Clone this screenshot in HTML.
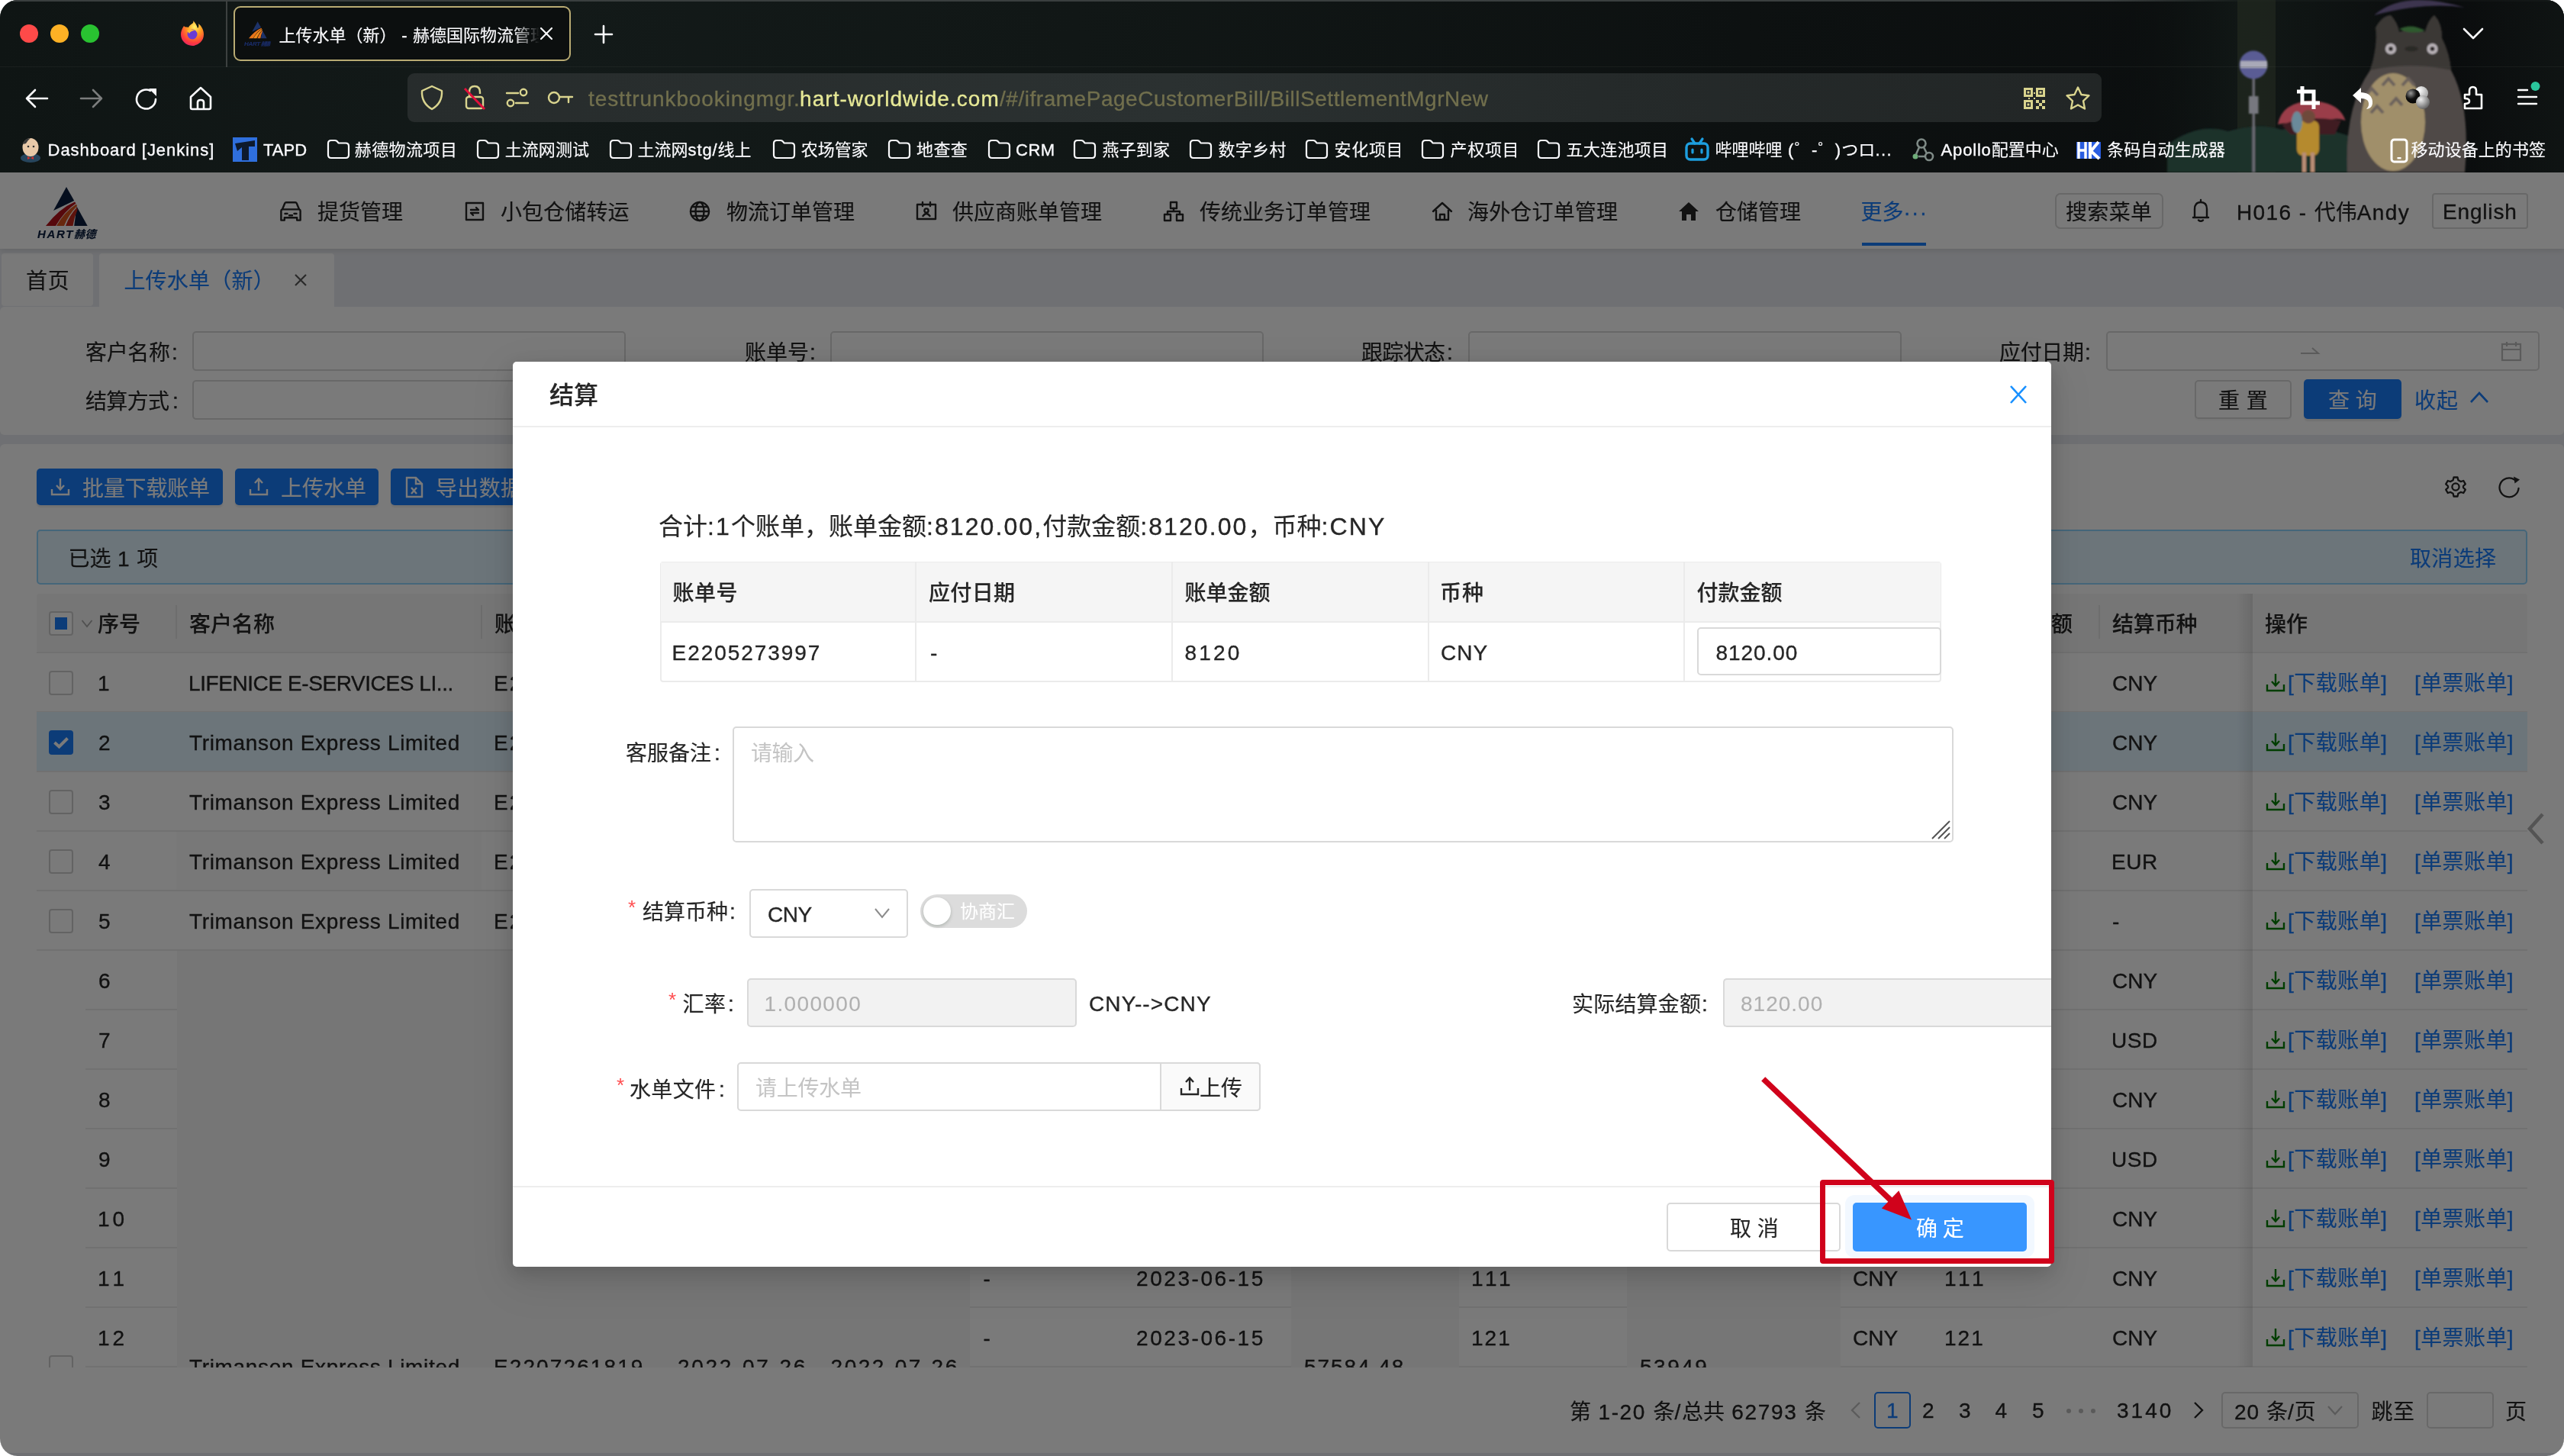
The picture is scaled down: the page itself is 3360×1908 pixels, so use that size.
<!DOCTYPE html>
<html lang="zh-CN">
<head>
<meta charset="utf-8">
<title>上传水单（新） - 赫德国际物流管理</title>
<style>html,body{margin:0;padding:0;background:#fff;}body{width:3360px;height:1908px;overflow:hidden;position:relative;font-family:"Liberation Sans","Noto Sans CJK SC",sans-serif;}#win{position:absolute;left:0;top:0;width:3360px;height:1908px;border-radius:23px;overflow:hidden;background:#7a7a7a;will-change:transform;}.a{position:absolute;box-sizing:content-box;}.t{white-space:pre;-webkit-text-stroke:0.35px;}.c{-webkit-text-stroke:0.15px;}.z{letter-spacing:0;}svg.a{overflow:visible;}@media (min-resolution:2dppx) and (max-width:2000px){body{width:1680px;height:954px;}#win{transform:scale(.5);transform-origin:0 0;}}</style>
</head>
<body>
<div id="win">
<div class="a" id="app" style="left:0;top:226px;width:3360px;height:1682px;overflow:hidden;background:#e9ebf0;z-index:0"><div class="a" style="left:0;top:-226px;width:3360px;height:1908px">
<div class="a" style="left:0px;top:326px;width:3360px;height:76px;background:#e9ebf0;"></div>
<div class="a" style="left:2px;top:332px;width:120px;height:69px;background:#fdfdfd;border-radius:4px;"></div>
<div class="a t" style="left:34px;top:348.0px;height:42px;line-height:42px;font-size:28px;color:#262626;-webkit-text-stroke:0.15px;letter-spacing:0.7px;">首页</div>
<div class="a" style="left:130px;top:332px;width:308px;height:70px;background:#fff;border-radius:4px;border-bottom-left-radius:0;border-bottom-right-radius:0;"></div>
<div class="a t" style="left:162.4px;top:348.0px;height:42px;line-height:42px;font-size:28px;color:#1b7dfa;-webkit-text-stroke:0.15px;letter-spacing:0.23px;">上传水单（新）</div>
<svg class="a" style="left:385px;top:358px;" width="18" height="18" viewBox="0 0 18 18"><path d="M2 2 L16 16 M16 2 L2 16" stroke="#595959" stroke-width="2.2" fill="none"/></svg>
<div class="a" style="left:0px;top:402px;width:3360px;height:168px;background:#fff;border-radius:6px;"></div>
<div class="a" style="left:0px;top:570px;width:3360px;height:12px;background:#e9ebf0;z-index:0;"></div>
<div class="a t" style="left:112px;top:442.0px;height:42px;line-height:42px;font-size:28px;color:#262626;-webkit-text-stroke:0.15px;letter-spacing:-0.33px;">客户名称</div>
<div class="a t" style="left:225px;top:440.5px;height:42px;line-height:42px;font-size:28px;color:#262626;">:</div>
<div class="a" style="left:252px;top:434px;width:568px;height:52px;background:#fff;border:2px solid #d9d9d9;border-radius:5px;box-sizing:border-box;"></div>
<div class="a t" style="left:976px;top:442.0px;height:42px;line-height:42px;font-size:28px;color:#262626;-webkit-text-stroke:0.15px;">账单号</div>
<div class="a t" style="left:1061px;top:440.5px;height:42px;line-height:42px;font-size:28px;color:#262626;">:</div>
<div class="a" style="left:1088px;top:434px;width:568px;height:52px;background:#fff;border:2px solid #d9d9d9;border-radius:5px;box-sizing:border-box;"></div>
<div class="a t" style="left:1784px;top:442.0px;height:42px;line-height:42px;font-size:28px;color:#262626;-webkit-text-stroke:0.15px;letter-spacing:-0.67px;">跟踪状态</div>
<div class="a t" style="left:1896px;top:440.5px;height:42px;line-height:42px;font-size:28px;color:#262626;">:</div>
<div class="a" style="left:1924px;top:434px;width:568px;height:52px;background:#fff;border:2px solid #d9d9d9;border-radius:5px;box-sizing:border-box;"></div>
<div class="a t" style="left:2620px;top:442.0px;height:42px;line-height:42px;font-size:28px;color:#262626;-webkit-text-stroke:0.15px;letter-spacing:-0.33px;">应付日期</div>
<div class="a t" style="left:2732px;top:440.5px;height:42px;line-height:42px;font-size:28px;color:#262626;">:</div>
<div class="a" style="left:2760px;top:434px;width:568px;height:52px;background:#fff;border:2px solid #d9d9d9;border-radius:5px;box-sizing:border-box;"></div>
<div class="a t" style="left:112px;top:506.0px;height:42px;line-height:42px;font-size:28px;color:#262626;-webkit-text-stroke:0.15px;letter-spacing:-0.67px;">结算方式</div>
<div class="a t" style="left:226px;top:504.5px;height:42px;line-height:42px;font-size:28px;color:#262626;">:</div>
<div class="a" style="left:252px;top:498px;width:568px;height:52px;background:#fff;border:2px solid #d9d9d9;border-radius:5px;box-sizing:border-box;"></div>
<svg class="a" style="left:3014px;top:450px;" width="26" height="18" viewBox="0 0 26 18"><path d="M1 13 H24 L16 6" stroke="#bfbfbf" stroke-width="2" fill="none"/></svg>
<svg class="a" style="left:3277px;top:446px;" width="28" height="28" viewBox="0 0 28 28"><rect x="2" y="5" width="24" height="21" stroke="#bfbfbf" stroke-width="2.2" fill="none"/><path d="M2 12 H26 M8 2 V8 M20 2 V8" stroke="#bfbfbf" stroke-width="2.2" fill="none"/></svg>
<div class="a" style="left:2875.5px;top:497.5px;width:127.5px;height:51.5px;background:#fff;border:2px solid #d9d9d9;border-radius:5px;box-sizing:border-box;box-shadow:0 2px 0 rgba(0,0,0,.03);"></div>
<div class="a t" style="left:2907px;top:504.5px;height:42px;line-height:42px;font-size:28px;color:#262626;letter-spacing:0.5px;"><span class="c">重</span> <span class="c">置</span></div>
<div class="a" style="left:3019px;top:497px;width:128px;height:52px;background:#1b7dfa;border-radius:5px;box-shadow:0 3px 2px rgba(0,0,0,.08);"></div>
<div class="a t" style="left:3051px;top:505.0px;height:42px;line-height:42px;font-size:28px;color:#fff;-webkit-text-stroke:0.1px;">查 询</div>
<div class="a t" style="left:3164px;top:505.0px;height:42px;line-height:42px;font-size:28px;color:#1b7dfa;-webkit-text-stroke:0.15px;letter-spacing:1.0px;">收起</div>
<svg class="a" style="left:3236px;top:512px;" width="26" height="18" viewBox="0 0 26 18"><path d="M2 15 L13 3 L24 15" stroke="#1b7dfa" stroke-width="2.6" fill="none"/></svg>
<div class="a" style="left:0px;top:582px;width:3360px;height:1326px;background:#fff;border-radius:6px;"></div>
<div class="a" style="left:48px;top:614px;width:244px;height:48px;background:#1b7dfa;border-radius:5px;box-shadow:0 3px 2px rgba(0,0,0,.07);"></div>
<svg class="a" style="left:66px;top:626px;" width="26" height="24" viewBox="0 0 26 24"><path d="M2 15 V22 H24 V15 M13 1 V15 M8 10 L13 15.5 L18 10" stroke="#fff" stroke-width="2.4" fill="none"/></svg>
<div class="a t" style="left:108px;top:620.0px;height:42px;line-height:42px;font-size:28px;color:#fff;-webkit-text-stroke:0.1px;letter-spacing:-0.2px;">批量下载账单</div>
<div class="a" style="left:308px;top:614px;width:188px;height:48px;background:#1b7dfa;border-radius:5px;box-shadow:0 3px 2px rgba(0,0,0,.07);"></div>
<svg class="a" style="left:326px;top:626px;" width="26" height="24" viewBox="0 0 26 24"><path d="M2 15 V22 H24 V15 M13 17 V2 M8 7 L13 1.5 L18 7" stroke="#fff" stroke-width="2.4" fill="none"/></svg>
<div class="a t" style="left:368px;top:620.0px;height:42px;line-height:42px;font-size:28px;color:#fff;-webkit-text-stroke:0.1px;">上传水单</div>
<div class="a" style="left:512px;top:614px;width:188px;height:48px;background:#1b7dfa;border-radius:5px;box-shadow:0 3px 2px rgba(0,0,0,.07);"></div>
<svg class="a" style="left:530px;top:624px;" width="26" height="29" viewBox="0 0 26 29"><path d="M3 2 H15 L23 10 V27 H3 Z M15 2 V10 H23" stroke="#fff" stroke-width="2.4" fill="none" stroke-width="2"/><path d="M9 15 L16 23 M16 15 L9 23" stroke="#fff" stroke-width="2.4" fill="none" stroke-width="2"/></svg>
<div class="a t" style="left:571px;top:620.0px;height:42px;line-height:42px;font-size:28px;color:#fff;-webkit-text-stroke:0.1px;letter-spacing:0.33px;">导出数据</div>
<svg class="a" style="left:3203px;top:623px;" width="30" height="30" viewBox="0 0 30 30"><circle cx="15" cy="15" r="4.6" stroke="#262626" stroke-width="2.3" fill="none"/><path d="M12.5 2.5 H17.5 L18.4 6.3 L21.6 8.1 L25.3 7 L27.8 11.3 L25 14 V16 L27.8 18.7 L25.3 23 L21.6 21.9 L18.4 23.7 L17.5 27.5 H12.5 L11.6 23.7 L8.4 21.9 L4.7 23 L2.2 18.7 L5 16 V14 L2.2 11.3 L4.7 7 L8.4 8.1 L11.6 6.3 Z" stroke="#262626" stroke-width="2.3" fill="none" stroke-linejoin="round"/></svg>
<svg class="a" style="left:3273px;top:623px;" width="32" height="30" viewBox="0 0 32 30"><path d="M27.5 17 A12.5 12.5 0 1 1 22 5.5" stroke="#262626" stroke-width="2.3" fill="none" stroke-linecap="round"/><path d="M21 1.5 L29 5.5 L22.5 10.5 Z" fill="#262626"/></svg>
<div class="a" style="left:48px;top:694px;width:3264px;height:72px;background:#e1f4ff;border:2px solid #91d5ff;border-radius:5px;box-sizing:border-box;"></div>
<div class="a t" style="left:89.5px;top:712.0px;height:42px;line-height:42px;font-size:28px;color:#262626;letter-spacing:0.83px;"><span class="c z">已选</span> 1 <span class="c z">项</span></div>
<div class="a t" style="left:3158px;top:712.0px;height:42px;line-height:42px;font-size:28px;color:#1b7dfa;-webkit-text-stroke:0.15px;letter-spacing:0.33px;">取消选择</div>
<div class="a" style="left:48px;top:778px;width:3264px;height:77px;background:#f6f6f6;border-radius:4px;"></div>
<div class="a" style="left:48px;top:854px;width:3264px;height:2px;background:#ececec;"></div>
<div class="a" style="left:230px;top:793px;width:2px;height:44px;background:#e4e4e4;"></div>
<div class="a" style="left:630px;top:793px;width:2px;height:44px;background:#e4e4e4;"></div>
<div class="a" style="left:2750px;top:793px;width:2px;height:44px;background:#e4e4e4;"></div>
<div class="a t" style="left:128px;top:797.5px;height:42px;line-height:42px;font-size:28px;color:#262626;font-weight:500;-webkit-text-stroke:0.15px;">序号</div>
<div class="a t" style="left:248px;top:797.5px;height:42px;line-height:42px;font-size:28px;color:#262626;font-weight:500;-webkit-text-stroke:0.15px;">客户名称</div>
<div class="a t" style="left:648px;top:797.5px;height:42px;line-height:42px;font-size:28px;color:#262626;font-weight:500;-webkit-text-stroke:0.15px;letter-spacing:0.5px;">账单号</div>
<div class="a t" style="left:2548px;top:797.5px;height:42px;line-height:42px;font-size:28px;color:#262626;font-weight:500;-webkit-text-stroke:0.15px;">实际结算金额</div>
<div class="a t" style="left:2768px;top:797.5px;height:42px;line-height:42px;font-size:28px;color:#262626;font-weight:500;-webkit-text-stroke:0.15px;letter-spacing:-0.13px;">结算币种</div>
<div class="a" style="left:64px;top:801px;width:32px;height:32px;background:#fff;border:2px solid #d0d0d0;border-radius:4px;box-sizing:border-box;"></div>
<div class="a" style="left:72px;top:809px;width:16px;height:16px;background:#1b7dfa;"></div>
<svg class="a" style="left:106px;top:811px;" width="16" height="12" viewBox="0 0 16 12"><path d="M1.5 2 L8 10 L14.5 2" stroke="#a8a8a8" stroke-width="1.8" fill="none"/></svg>
<div class="a" style="left:0px;top:855px;width:3360px;height:937px;overflow:hidden;"><div class="a" style="left:0;top:-855px;width:3360px;height:1908px"><div class="a" style="left:232px;top:1245px;width:1039px;height:547px;background:#f6f6f6;"></div><div class="a" style="left:231px;top:1089px;width:400px;height:78px;background:#fafafa;"></div><div class="a" style="left:1692px;top:1635px;width:220px;height:157px;background:#f6f6f6;"></div><div class="a" style="left:2132px;top:1635px;width:280px;height:157px;background:#f6f6f6;"></div><div class="a" style="left:48px;top:932px;width:3264px;height:2px;background:#ececec;"></div><div class="a" style="left:64px;top:879px;width:32px;height:32px;background:#fff;border:2px solid #d0d0d0;border-radius:4px;box-sizing:border-box;"></div><div class="a t" style="left:247px;top:874.7px;height:42px;line-height:42px;font-size:28px;color:#262626;letter-spacing:-0.42px;">LIFENICE E-SERVICES LI...</div><div class="a t" style="left:647px;top:874.7px;height:42px;line-height:42px;font-size:28px;color:#262626;letter-spacing:2.0px;">E22</div><div class="a t" style="left:128px;top:874.7px;height:42px;line-height:42px;font-size:28px;color:#262626;">1</div><div class="a t" style="left:2768px;top:874.7px;height:42px;line-height:42px;font-size:28px;color:#262626;">CNY</div><div class="a" style="left:48px;top:933px;width:3264px;height:78px;background:#e1f4ff;"></div><div class="a" style="left:48px;top:1010px;width:3264px;height:2px;background:#ececec;"></div><div class="a" style="left:64px;top:957px;width:32px;height:32px;background:#1b7dfa;border-radius:4px;"></div><svg class="a" style="left:69px;top:965px;" width="22" height="16" viewBox="0 0 22 16"><path d="M2.5 8 L8.5 13.5 L19.5 2.5" stroke="#fff" stroke-width="4" fill="none"/></svg><div class="a t" style="left:248px;top:952.7px;height:42px;line-height:42px;font-size:28px;color:#262626;letter-spacing:0.67px;">Trimanson Express Limited</div><div class="a t" style="left:647px;top:952.7px;height:42px;line-height:42px;font-size:28px;color:#262626;letter-spacing:2.0px;">E22</div><div class="a t" style="left:129px;top:952.7px;height:42px;line-height:42px;font-size:28px;color:#262626;">2</div><div class="a t" style="left:2768px;top:952.7px;height:42px;line-height:42px;font-size:28px;color:#262626;">CNY</div><div class="a" style="left:48px;top:1088px;width:3264px;height:2px;background:#ececec;"></div><div class="a" style="left:64px;top:1035px;width:32px;height:32px;background:#fff;border:2px solid #d0d0d0;border-radius:4px;box-sizing:border-box;"></div><div class="a t" style="left:248px;top:1030.7px;height:42px;line-height:42px;font-size:28px;color:#262626;letter-spacing:0.67px;">Trimanson Express Limited</div><div class="a t" style="left:647px;top:1030.7px;height:42px;line-height:42px;font-size:28px;color:#262626;letter-spacing:2.0px;">E22</div><div class="a t" style="left:129px;top:1030.7px;height:42px;line-height:42px;font-size:28px;color:#262626;">3</div><div class="a t" style="left:2768px;top:1030.7px;height:42px;line-height:42px;font-size:28px;color:#262626;">CNY</div><div class="a" style="left:48px;top:1166px;width:3264px;height:2px;background:#ececec;"></div><div class="a" style="left:64px;top:1113px;width:32px;height:32px;background:#fff;border:2px solid #d0d0d0;border-radius:4px;box-sizing:border-box;"></div><div class="a t" style="left:248px;top:1108.7px;height:42px;line-height:42px;font-size:28px;color:#262626;letter-spacing:0.67px;">Trimanson Express Limited</div><div class="a t" style="left:647px;top:1108.7px;height:42px;line-height:42px;font-size:28px;color:#262626;letter-spacing:2.0px;">E22</div><div class="a t" style="left:129px;top:1108.7px;height:42px;line-height:42px;font-size:28px;color:#262626;">4</div><div class="a t" style="left:2767px;top:1108.7px;height:42px;line-height:42px;font-size:28px;color:#262626;letter-spacing:0.5px;">EUR</div><div class="a" style="left:48px;top:1244px;width:3264px;height:2px;background:#ececec;"></div><div class="a" style="left:64px;top:1191px;width:32px;height:32px;background:#fff;border:2px solid #d0d0d0;border-radius:4px;box-sizing:border-box;"></div><div class="a t" style="left:248px;top:1186.7px;height:42px;line-height:42px;font-size:28px;color:#262626;letter-spacing:0.67px;">Trimanson Express Limited</div><div class="a t" style="left:647px;top:1186.7px;height:42px;line-height:42px;font-size:28px;color:#262626;letter-spacing:2.0px;">E22</div><div class="a t" style="left:129px;top:1186.7px;height:42px;line-height:42px;font-size:28px;color:#262626;">5</div><div class="a t" style="left:2768px;top:1186.7px;height:42px;line-height:42px;font-size:28px;color:#262626;">-</div><div class="a" style="left:112px;top:1322px;width:120px;height:2px;background:#ececec;"></div><div class="a" style="left:1271px;top:1322px;width:421px;height:2px;background:#ececec;"></div><div class="a" style="left:1912px;top:1322px;width:220px;height:2px;background:#ececec;"></div><div class="a" style="left:2412px;top:1322px;width:900px;height:2px;background:#ececec;"></div><div class="a t" style="left:129px;top:1264.7px;height:42px;line-height:42px;font-size:28px;color:#262626;">6</div><div class="a t" style="left:2768px;top:1264.7px;height:42px;line-height:42px;font-size:28px;color:#262626;">CNY</div><div class="a" style="left:112px;top:1400px;width:120px;height:2px;background:#ececec;"></div><div class="a" style="left:1271px;top:1400px;width:421px;height:2px;background:#ececec;"></div><div class="a" style="left:1912px;top:1400px;width:220px;height:2px;background:#ececec;"></div><div class="a" style="left:2412px;top:1400px;width:900px;height:2px;background:#ececec;"></div><div class="a t" style="left:129px;top:1342.7px;height:42px;line-height:42px;font-size:28px;color:#262626;">7</div><div class="a t" style="left:2767px;top:1342.7px;height:42px;line-height:42px;font-size:28px;color:#262626;letter-spacing:0.5px;">USD</div><div class="a" style="left:112px;top:1478px;width:120px;height:2px;background:#ececec;"></div><div class="a" style="left:1271px;top:1478px;width:421px;height:2px;background:#ececec;"></div><div class="a" style="left:1912px;top:1478px;width:220px;height:2px;background:#ececec;"></div><div class="a" style="left:2412px;top:1478px;width:900px;height:2px;background:#ececec;"></div><div class="a t" style="left:129px;top:1420.7px;height:42px;line-height:42px;font-size:28px;color:#262626;">8</div><div class="a t" style="left:2768px;top:1420.7px;height:42px;line-height:42px;font-size:28px;color:#262626;">CNY</div><div class="a" style="left:112px;top:1556px;width:120px;height:2px;background:#ececec;"></div><div class="a" style="left:1271px;top:1556px;width:421px;height:2px;background:#ececec;"></div><div class="a" style="left:1912px;top:1556px;width:220px;height:2px;background:#ececec;"></div><div class="a" style="left:2412px;top:1556px;width:900px;height:2px;background:#ececec;"></div><div class="a t" style="left:129px;top:1498.7px;height:42px;line-height:42px;font-size:28px;color:#262626;">9</div><div class="a t" style="left:2767px;top:1498.7px;height:42px;line-height:42px;font-size:28px;color:#262626;letter-spacing:0.5px;">USD</div><div class="a" style="left:112px;top:1634px;width:120px;height:2px;background:#ececec;"></div><div class="a" style="left:1271px;top:1634px;width:421px;height:2px;background:#ececec;"></div><div class="a" style="left:1912px;top:1634px;width:220px;height:2px;background:#ececec;"></div><div class="a" style="left:2412px;top:1634px;width:900px;height:2px;background:#ececec;"></div><div class="a t" style="left:128px;top:1576.7px;height:42px;line-height:42px;font-size:28px;color:#262626;letter-spacing:4.0px;">10</div><div class="a t" style="left:2768px;top:1576.7px;height:42px;line-height:42px;font-size:28px;color:#262626;">CNY</div><div class="a" style="left:112px;top:1712px;width:120px;height:2px;background:#ececec;"></div><div class="a" style="left:1271px;top:1712px;width:421px;height:2px;background:#ececec;"></div><div class="a" style="left:1912px;top:1712px;width:220px;height:2px;background:#ececec;"></div><div class="a" style="left:2412px;top:1712px;width:900px;height:2px;background:#ececec;"></div><div class="a t" style="left:128px;top:1654.7px;height:42px;line-height:42px;font-size:28px;color:#262626;letter-spacing:6.0px;">11</div><div class="a t" style="left:2768px;top:1654.7px;height:42px;line-height:42px;font-size:28px;color:#262626;">CNY</div><div class="a" style="left:112px;top:1790px;width:120px;height:2px;background:#ececec;"></div><div class="a" style="left:1271px;top:1790px;width:421px;height:2px;background:#ececec;"></div><div class="a" style="left:1912px;top:1790px;width:220px;height:2px;background:#ececec;"></div><div class="a" style="left:2412px;top:1790px;width:900px;height:2px;background:#ececec;"></div><div class="a t" style="left:128px;top:1732.7px;height:42px;line-height:42px;font-size:28px;color:#262626;letter-spacing:4.0px;">12</div><div class="a t" style="left:2768px;top:1732.7px;height:42px;line-height:42px;font-size:28px;color:#262626;">CNY</div><div class="a t" style="left:1288.5px;top:1654.7px;height:42px;line-height:42px;font-size:28px;color:#262626;">-</div><div class="a t" style="left:1489px;top:1654.7px;height:42px;line-height:42px;font-size:28px;color:#262626;letter-spacing:2.56px;">2023-06-15</div><div class="a t" style="left:1928px;top:1654.7px;height:42px;line-height:42px;font-size:28px;color:#262626;letter-spacing:4.5px;">111</div><div class="a t" style="left:2428px;top:1654.7px;height:42px;line-height:42px;font-size:28px;color:#262626;">CNY</div><div class="a t" style="left:2548px;top:1654.7px;height:42px;line-height:42px;font-size:28px;color:#262626;letter-spacing:4.5px;">111</div><div class="a t" style="left:1288.5px;top:1732.7px;height:42px;line-height:42px;font-size:28px;color:#262626;">-</div><div class="a t" style="left:1489px;top:1732.7px;height:42px;line-height:42px;font-size:28px;color:#262626;letter-spacing:2.56px;">2023-06-15</div><div class="a t" style="left:1928px;top:1732.7px;height:42px;line-height:42px;font-size:28px;color:#262626;letter-spacing:2.0px;">121</div><div class="a t" style="left:2428px;top:1732.7px;height:42px;line-height:42px;font-size:28px;color:#262626;">CNY</div><div class="a t" style="left:2548px;top:1732.7px;height:42px;line-height:42px;font-size:28px;color:#262626;letter-spacing:2.0px;">121</div><div class="a" style="left:64px;top:1776px;width:32px;height:32px;background:#fff;border:2px solid #d0d0d0;border-radius:4px;box-sizing:border-box;"></div><div class="a t" style="left:248px;top:1771.2px;height:42px;line-height:42px;font-size:28px;color:#262626;letter-spacing:0.67px;">Trimanson Express Limited</div><div class="a t" style="left:647px;top:1771.2px;height:42px;line-height:42px;font-size:28px;color:#262626;letter-spacing:2.1px;">E2207261819</div><div class="a t" style="left:888px;top:1771.2px;height:42px;line-height:42px;font-size:28px;color:#262626;letter-spacing:2.67px;">2022-07-26</div><div class="a t" style="left:1088.6px;top:1771.2px;height:42px;line-height:42px;font-size:28px;color:#262626;letter-spacing:2.49px;">2022-07-26</div><div class="a t" style="left:1709px;top:1771.2px;height:42px;line-height:42px;font-size:28px;color:#262626;letter-spacing:1.94px;">57584.48</div><div class="a t" style="left:2149px;top:1771.2px;height:42px;line-height:42px;font-size:28px;color:#262626;letter-spacing:2.5px;">53949</div><div class="a" style="left:2932px;top:778px;width:20px;height:1013px;background:linear-gradient(90deg,rgba(0,0,0,0) 0%,rgba(0,0,0,.10) 100%);"></div><svg class="a" style="left:2969px;top:881px;" width="26" height="26" viewBox="0 0 26 26"><path d="M2 16 V24 H24 V16 M13 2 V17 M8 12 L13 17.5 L18 12" stroke="#008000" stroke-width="2.4" fill="none"/></svg><div class="a t" style="left:2998px;top:875.2px;height:42px;line-height:42px;font-size:28px;color:#1b7dfa;letter-spacing:0.5px;">[<span class="c">下载账单</span>]</div><div class="a t" style="left:3164px;top:875.2px;height:42px;line-height:42px;font-size:28px;color:#1b7dfa;letter-spacing:0.4px;">[<span class="c">单票账单</span>]</div><svg class="a" style="left:2969px;top:959px;" width="26" height="26" viewBox="0 0 26 26"><path d="M2 16 V24 H24 V16 M13 2 V17 M8 12 L13 17.5 L18 12" stroke="#008000" stroke-width="2.4" fill="none"/></svg><div class="a t" style="left:2998px;top:953.2px;height:42px;line-height:42px;font-size:28px;color:#1b7dfa;letter-spacing:0.5px;">[<span class="c">下载账单</span>]</div><div class="a t" style="left:3164px;top:953.2px;height:42px;line-height:42px;font-size:28px;color:#1b7dfa;letter-spacing:0.4px;">[<span class="c">单票账单</span>]</div><svg class="a" style="left:2969px;top:1037px;" width="26" height="26" viewBox="0 0 26 26"><path d="M2 16 V24 H24 V16 M13 2 V17 M8 12 L13 17.5 L18 12" stroke="#008000" stroke-width="2.4" fill="none"/></svg><div class="a t" style="left:2998px;top:1031.2px;height:42px;line-height:42px;font-size:28px;color:#1b7dfa;letter-spacing:0.5px;">[<span class="c">下载账单</span>]</div><div class="a t" style="left:3164px;top:1031.2px;height:42px;line-height:42px;font-size:28px;color:#1b7dfa;letter-spacing:0.4px;">[<span class="c">单票账单</span>]</div><svg class="a" style="left:2969px;top:1115px;" width="26" height="26" viewBox="0 0 26 26"><path d="M2 16 V24 H24 V16 M13 2 V17 M8 12 L13 17.5 L18 12" stroke="#008000" stroke-width="2.4" fill="none"/></svg><div class="a t" style="left:2998px;top:1109.2px;height:42px;line-height:42px;font-size:28px;color:#1b7dfa;letter-spacing:0.5px;">[<span class="c">下载账单</span>]</div><div class="a t" style="left:3164px;top:1109.2px;height:42px;line-height:42px;font-size:28px;color:#1b7dfa;letter-spacing:0.4px;">[<span class="c">单票账单</span>]</div><svg class="a" style="left:2969px;top:1193px;" width="26" height="26" viewBox="0 0 26 26"><path d="M2 16 V24 H24 V16 M13 2 V17 M8 12 L13 17.5 L18 12" stroke="#008000" stroke-width="2.4" fill="none"/></svg><div class="a t" style="left:2998px;top:1187.2px;height:42px;line-height:42px;font-size:28px;color:#1b7dfa;letter-spacing:0.5px;">[<span class="c">下载账单</span>]</div><div class="a t" style="left:3164px;top:1187.2px;height:42px;line-height:42px;font-size:28px;color:#1b7dfa;letter-spacing:0.4px;">[<span class="c">单票账单</span>]</div><svg class="a" style="left:2969px;top:1271px;" width="26" height="26" viewBox="0 0 26 26"><path d="M2 16 V24 H24 V16 M13 2 V17 M8 12 L13 17.5 L18 12" stroke="#008000" stroke-width="2.4" fill="none"/></svg><div class="a t" style="left:2998px;top:1265.2px;height:42px;line-height:42px;font-size:28px;color:#1b7dfa;letter-spacing:0.5px;">[<span class="c">下载账单</span>]</div><div class="a t" style="left:3164px;top:1265.2px;height:42px;line-height:42px;font-size:28px;color:#1b7dfa;letter-spacing:0.4px;">[<span class="c">单票账单</span>]</div><svg class="a" style="left:2969px;top:1349px;" width="26" height="26" viewBox="0 0 26 26"><path d="M2 16 V24 H24 V16 M13 2 V17 M8 12 L13 17.5 L18 12" stroke="#008000" stroke-width="2.4" fill="none"/></svg><div class="a t" style="left:2998px;top:1343.2px;height:42px;line-height:42px;font-size:28px;color:#1b7dfa;letter-spacing:0.5px;">[<span class="c">下载账单</span>]</div><div class="a t" style="left:3164px;top:1343.2px;height:42px;line-height:42px;font-size:28px;color:#1b7dfa;letter-spacing:0.4px;">[<span class="c">单票账单</span>]</div><svg class="a" style="left:2969px;top:1427px;" width="26" height="26" viewBox="0 0 26 26"><path d="M2 16 V24 H24 V16 M13 2 V17 M8 12 L13 17.5 L18 12" stroke="#008000" stroke-width="2.4" fill="none"/></svg><div class="a t" style="left:2998px;top:1421.2px;height:42px;line-height:42px;font-size:28px;color:#1b7dfa;letter-spacing:0.5px;">[<span class="c">下载账单</span>]</div><div class="a t" style="left:3164px;top:1421.2px;height:42px;line-height:42px;font-size:28px;color:#1b7dfa;letter-spacing:0.4px;">[<span class="c">单票账单</span>]</div><svg class="a" style="left:2969px;top:1505px;" width="26" height="26" viewBox="0 0 26 26"><path d="M2 16 V24 H24 V16 M13 2 V17 M8 12 L13 17.5 L18 12" stroke="#008000" stroke-width="2.4" fill="none"/></svg><div class="a t" style="left:2998px;top:1499.2px;height:42px;line-height:42px;font-size:28px;color:#1b7dfa;letter-spacing:0.5px;">[<span class="c">下载账单</span>]</div><div class="a t" style="left:3164px;top:1499.2px;height:42px;line-height:42px;font-size:28px;color:#1b7dfa;letter-spacing:0.4px;">[<span class="c">单票账单</span>]</div><svg class="a" style="left:2969px;top:1583px;" width="26" height="26" viewBox="0 0 26 26"><path d="M2 16 V24 H24 V16 M13 2 V17 M8 12 L13 17.5 L18 12" stroke="#008000" stroke-width="2.4" fill="none"/></svg><div class="a t" style="left:2998px;top:1577.2px;height:42px;line-height:42px;font-size:28px;color:#1b7dfa;letter-spacing:0.5px;">[<span class="c">下载账单</span>]</div><div class="a t" style="left:3164px;top:1577.2px;height:42px;line-height:42px;font-size:28px;color:#1b7dfa;letter-spacing:0.4px;">[<span class="c">单票账单</span>]</div><svg class="a" style="left:2969px;top:1661px;" width="26" height="26" viewBox="0 0 26 26"><path d="M2 16 V24 H24 V16 M13 2 V17 M8 12 L13 17.5 L18 12" stroke="#008000" stroke-width="2.4" fill="none"/></svg><div class="a t" style="left:2998px;top:1655.2px;height:42px;line-height:42px;font-size:28px;color:#1b7dfa;letter-spacing:0.5px;">[<span class="c">下载账单</span>]</div><div class="a t" style="left:3164px;top:1655.2px;height:42px;line-height:42px;font-size:28px;color:#1b7dfa;letter-spacing:0.4px;">[<span class="c">单票账单</span>]</div><svg class="a" style="left:2969px;top:1739px;" width="26" height="26" viewBox="0 0 26 26"><path d="M2 16 V24 H24 V16 M13 2 V17 M8 12 L13 17.5 L18 12" stroke="#008000" stroke-width="2.4" fill="none"/></svg><div class="a t" style="left:2998px;top:1733.2px;height:42px;line-height:42px;font-size:28px;color:#1b7dfa;letter-spacing:0.5px;">[<span class="c">下载账单</span>]</div><div class="a t" style="left:3164px;top:1733.2px;height:42px;line-height:42px;font-size:28px;color:#1b7dfa;letter-spacing:0.4px;">[<span class="c">单票账单</span>]</div></div></div>
<div class="a" style="left:2932px;top:778px;width:20px;height:77px;background:linear-gradient(90deg,rgba(0,0,0,0) 0%,rgba(0,0,0,.10) 100%);"></div>
<div class="a t" style="left:2968px;top:797.5px;height:42px;line-height:42px;font-size:28px;color:#262626;font-weight:500;-webkit-text-stroke:0.15px;">操作</div>
<svg class="a" style="left:3310px;top:1064px;" width="26" height="44" viewBox="0 0 26 44"><path d="M22 3 L5 22 L22 41" stroke="#b0b0b0" stroke-width="4.6" fill="none"/></svg>
<div class="a t" style="left:2057px;top:1829.5px;height:42px;line-height:42px;font-size:28px;color:#262626;letter-spacing:1.64px;"><span class="c z">第</span> 1-20 <span class="c z">条</span>/<span class="c z">总共</span> 62793 <span class="c z">条</span></div>
<svg class="a" style="left:2424px;top:1836px;" width="16" height="24" viewBox="0 0 16 24"><path d="M13 2 L3 12 L13 22" stroke="#c0c0c0" stroke-width="2.4" fill="none"/></svg>
<div class="a" style="left:2456px;top:1824px;width:48px;height:48px;background:#fff;border:2px solid #1b7dfa;border-radius:5px;box-sizing:border-box;"></div>
<div class="a t" style="left:2472px;top:1828.0px;height:42px;line-height:42px;font-size:28px;color:#1b7dfa;">1</div>
<div class="a t" style="left:2519px;top:1828.0px;height:42px;line-height:42px;font-size:28px;color:#262626;">2</div>
<div class="a t" style="left:2567px;top:1828.0px;height:42px;line-height:42px;font-size:28px;color:#262626;">3</div>
<div class="a t" style="left:2614.5px;top:1828.0px;height:42px;line-height:42px;font-size:28px;color:#262626;">4</div>
<div class="a t" style="left:2663px;top:1828.0px;height:42px;line-height:42px;font-size:28px;color:#262626;">5</div>
<div class="a" style="left:2708px;top:1846px;width:6px;height:6px;background:#bdbdbd;border-radius:3px;"></div>
<div class="a" style="left:2724px;top:1846px;width:6px;height:6px;background:#bdbdbd;border-radius:3px;"></div>
<div class="a" style="left:2740px;top:1846px;width:6px;height:6px;background:#bdbdbd;border-radius:3px;"></div>
<div class="a t" style="left:2774px;top:1828.0px;height:42px;line-height:42px;font-size:28px;color:#262626;letter-spacing:3.0px;">3140</div>
<svg class="a" style="left:2873px;top:1836px;" width="16" height="24" viewBox="0 0 16 24"><path d="M3 2 L13 12 L3 22" stroke="#262626" stroke-width="2.4" fill="none"/></svg>
<div class="a" style="left:2911px;top:1824px;width:180px;height:48px;background:#fff;border:2px solid #d9d9d9;border-radius:5px;box-sizing:border-box;"></div>
<div class="a t" style="left:2928px;top:1829.5px;height:42px;line-height:42px;font-size:28px;color:#262626;letter-spacing:1.0px;">20 <span class="c z">条</span>/<span class="c z">页</span></div>
<svg class="a" style="left:3049px;top:1841px;" width="22" height="14" viewBox="0 0 22 14"><path d="M2 2 L11 12 L20 2" stroke="#bfbfbf" stroke-width="2.2" fill="none"/></svg>
<div class="a t" style="left:3107.5px;top:1829.5px;height:42px;line-height:42px;font-size:28px;color:#262626;-webkit-text-stroke:0.15px;letter-spacing:0.5px;">跳至</div>
<div class="a" style="left:3180px;top:1824px;width:88px;height:48px;background:#fff;border:2px solid #d9d9d9;border-radius:5px;box-sizing:border-box;"></div>
<div class="a t" style="left:3283px;top:1829.5px;height:42px;line-height:42px;font-size:28px;color:#262626;-webkit-text-stroke:0.15px;">页</div>
<div class="a" style="left:0px;top:1904px;width:3360px;height:4px;background:#e9ebf0;"></div>
<div class="a" style="left:0px;top:226px;width:3360px;height:100px;background:#fff;box-shadow:0 2px 8px rgba(0,0,0,.12);z-index:2;"></div>
<svg class="a" style="left:60px;top:245px;z-index:3;" width="56" height="52" viewBox="0 0 56 52"><path d="M27 0 L37.2 18 L10 31 Z" fill="#0b1f3f"/>
<path d="M40.5 25.6 L54.7 51 L37.2 51 Z" fill="#0b1f3f"/>
<path d="M0 51 Q18 28 38 19.5 L39.5 21.5 Q24 32 13 51 Z" fill="#b5121b"/>
<path d="M14 51 Q24 33 40 22.5 L41 25 Q30 36 24 51 Z" fill="#d9541e"/>
<path d="M26 51 Q31 37 41 26.5 L41.5 30 Q37 40 35.5 51 Z" fill="#c3281c"/></svg>
<div class="a t" style="left:49px;top:296.0px;height:22px;line-height:22px;font-size:15px;color:#0b1f3f;font-weight:700;-webkit-text-stroke:0.15px;letter-spacing:1.67px;font-style:italic;z-index:3;">HART</div>
<div class="a t" style="left:97px;top:297.0px;height:21px;line-height:21px;font-size:14px;color:#0b1f3f;font-weight:700;-webkit-text-stroke:0.15px;letter-spacing:0.5px;font-style:italic;z-index:3;">赫德</div>
<svg class="a" style="left:367px;top:263px;z-index:3;" width="28" height="28" viewBox="0 0 28 28"><path d="M6.3 3.2 Q6.8 2.2 8 2.2 H20 Q21.2 2.2 21.7 3.2 L25 11.2 Q26.6 11.8 26.6 13.2 V25.6 H22.2 V22.2 H5.8 V25.6 H1.4 V13.2 Q1.4 11.8 3 11.2 Z" stroke="#262626" stroke-width="2.4" fill="none" stroke-linejoin="round" stroke-linecap="round"/><path d="M3 11.4 H25 M6.5 17 H9.5 M18.5 17 H21.5 M12 19.2 H16" stroke="#262626" stroke-width="2.4" fill="none" stroke-linejoin="round" stroke-linecap="round" stroke-width="2.2"/></svg>
<div class="a t" style="left:416px;top:258.0px;height:42px;line-height:42px;font-size:28px;color:#262626;-webkit-text-stroke:0.15px;z-index:3;">提货管理</div>
<svg class="a" style="left:608px;top:263px;z-index:3;" width="28" height="28" viewBox="0 0 28 28"><rect x="3" y="3" width="22" height="22" stroke="#262626" stroke-width="2.4" fill="none" stroke-linejoin="round" stroke-linecap="round"/><path d="M9 12 H19 L16 9 M19 16 H9 L12 19" stroke="#262626" stroke-width="2.4" fill="none" stroke-linejoin="round" stroke-linecap="round" stroke-width="2"/></svg>
<div class="a t" style="left:656px;top:258.0px;height:42px;line-height:42px;font-size:28px;color:#262626;-webkit-text-stroke:0.15px;letter-spacing:0.1px;z-index:3;">小包仓储转运</div>
<svg class="a" style="left:903px;top:263px;z-index:3;" width="28" height="28" viewBox="0 0 28 28"><circle cx="14" cy="14" r="12" stroke="#262626" stroke-width="2.4" fill="none" stroke-linejoin="round" stroke-linecap="round"/><ellipse cx="14" cy="14" rx="5.5" ry="12" stroke="#262626" stroke-width="2.4" fill="none" stroke-linejoin="round" stroke-linecap="round" stroke-width="2"/><path d="M2 14 H26 M4 8 H24 M4 20 H24" stroke="#262626" stroke-width="2.4" fill="none" stroke-linejoin="round" stroke-linecap="round" stroke-width="2"/></svg>
<div class="a t" style="left:952px;top:258.0px;height:42px;line-height:42px;font-size:28px;color:#262626;-webkit-text-stroke:0.15px;z-index:3;">物流订单管理</div>
<svg class="a" style="left:1200px;top:263px;z-index:3;" width="28" height="28" viewBox="0 0 28 28"><rect x="2" y="5" width="24" height="19" stroke="#262626" stroke-width="2.4" fill="none" stroke-linejoin="round" stroke-linecap="round"/><path d="M9 2 V7 M19 2 V7" stroke="#262626" stroke-width="2.4" fill="none" stroke-linejoin="round" stroke-linecap="round"/><circle cx="14" cy="13" r="2.6" stroke="#262626" stroke-width="2.4" fill="none" stroke-linejoin="round" stroke-linecap="round" stroke-width="2"/><path d="M9.5 20 Q14 14 18.5 20" stroke="#262626" stroke-width="2.4" fill="none" stroke-linejoin="round" stroke-linecap="round" stroke-width="2"/></svg>
<div class="a t" style="left:1248px;top:258.0px;height:42px;line-height:42px;font-size:28px;color:#262626;-webkit-text-stroke:0.15px;z-index:3;">供应商账单管理</div>
<svg class="a" style="left:1524px;top:263px;z-index:3;" width="28" height="28" viewBox="0 0 28 28"><rect x="10" y="2" width="8" height="8" stroke="#262626" stroke-width="2.4" fill="none" stroke-linejoin="round" stroke-linecap="round"/><rect x="2" y="18" width="8" height="8" stroke="#262626" stroke-width="2.4" fill="none" stroke-linejoin="round" stroke-linecap="round"/><rect x="18" y="18" width="8" height="8" stroke="#262626" stroke-width="2.4" fill="none" stroke-linejoin="round" stroke-linecap="round"/><path d="M14 10 V14 M6 18 V14 H22 V18" stroke="#262626" stroke-width="2.4" fill="none" stroke-linejoin="round" stroke-linecap="round"/></svg>
<div class="a t" style="left:1572px;top:258.0px;height:42px;line-height:42px;font-size:28px;color:#262626;-webkit-text-stroke:0.15px;z-index:3;">传统业务订单管理</div>
<svg class="a" style="left:1876px;top:263px;z-index:3;" width="28" height="28" viewBox="0 0 28 28"><path d="M2 14 L14 3 L26 14 M6 12 V25 H22 V12 M11 25 V18 H17 V25" stroke="#262626" stroke-width="2.4" fill="none" stroke-linejoin="round" stroke-linecap="round"/></svg>
<div class="a t" style="left:1923px;top:258.0px;height:42px;line-height:42px;font-size:28px;color:#262626;-webkit-text-stroke:0.15px;letter-spacing:0.17px;z-index:3;">海外仓订单管理</div>
<svg class="a" style="left:2199px;top:263px;z-index:3;" width="28" height="28" viewBox="0 0 28 28"><path d="M1 14 L14 2 L27 14 H23 V26 H17 V18 H11 V26 H5 V14 Z" fill="#262626"/></svg>
<div class="a t" style="left:2248px;top:258.0px;height:42px;line-height:42px;font-size:28px;color:#262626;-webkit-text-stroke:0.15px;z-index:3;">仓储管理</div>
<div class="a t" style="left:2438.5px;top:258.0px;height:42px;line-height:42px;font-size:28px;color:#1b7dfa;letter-spacing:1.25px;z-index:3;"><span class="c z">更多</span>···</div>
<div class="a" style="left:2440px;top:318px;width:84px;height:4px;background:#1b7dfa;z-index:3;"></div>
<div class="a" style="left:2693px;top:252.5px;width:142px;height:47px;background:#fff;border:2px solid #d9d9d9;border-radius:7px;box-sizing:border-box;z-index:3;"></div>
<div class="a t" style="left:2707px;top:258.0px;height:42px;line-height:42px;font-size:28px;color:#262626;-webkit-text-stroke:0.15px;letter-spacing:0.33px;z-index:3;">搜索菜单</div>
<svg class="a" style="left:2870px;top:260px;z-index:3;" width="28" height="32" viewBox="0 0 28 32"><path d="M4 25 H24 M6 25 V14 Q6 5 14 5 Q22 5 22 14 V25 M14 2 V5" stroke="#262626" stroke-width="2.4" fill="none" stroke-linejoin="round" stroke-linecap="round"/><path d="M11 28.5 Q14 31 17 28.5" stroke="#262626" stroke-width="2.4" fill="none" stroke-linejoin="round" stroke-linecap="round"/></svg>
<div class="a t" style="left:2931px;top:258.0px;height:42px;line-height:42px;font-size:28px;color:#262626;letter-spacing:1.4px;z-index:3;">H016 - <span class="c z">代伟</span>Andy</div>
<div class="a" style="left:3187px;top:252.5px;width:126px;height:47px;background:#fff;border:2px solid #d9d9d9;border-radius:4px;box-sizing:border-box;z-index:3;"></div>
<div class="a t" style="left:3201px;top:256.5px;height:42px;line-height:42px;font-size:28px;color:#262626;letter-spacing:0.83px;z-index:3;">English</div>
</div>
<div class="a" style="left:0;top:0;width:3360px;height:1682px;background:rgba(0,0,0,0.52);z-index:5"></div>
</div>
<div class="a" style="left:0px;top:0px;width:3360px;height:226px;background:linear-gradient(90deg,#0f1514 0%,#131a19 20%,#111716 42%,#0d1111 68%,#0a0c0d 100%);"></div>
<div class="a" style="left:0px;top:0px;width:3360px;height:2px;background:#3a3f3f;"></div>
<svg class="a" style="left:2760px;top:0px;overflow:hidden;" width="600" height="226" viewBox="-100 0 600 226">
<defs><linearGradient id="rain" x1="0" x2="1" y1="0" y2="0"><stop offset="0" stop-color="#0b0f0f" stop-opacity="0"/><stop offset=".3" stop-color="#121917" stop-opacity=".9"/><stop offset=".75" stop-color="#0a0c0d" stop-opacity=".9"/><stop offset="1" stop-color="#101514" stop-opacity=".9"/></linearGradient>
<filter id="bl"><feGaussianBlur stdDeviation="1.1"/></filter></defs>
<rect x="-100" y="0" width="600" height="226" fill="url(#rain)"/>
<rect x="72" y="0" width="50" height="226" fill="#242b22" opacity=".6"/>
<g filter="url(#bl)">
<path d="M-20 226 L-20 190 Q20 160 60 172 Q100 160 130 170 Q170 160 224 180 L224 226 Z" fill="#1c302c"/>
<rect x="91.5" y="100" width="3.5" height="126" fill="#6b6b72"/>
<circle cx="93" cy="85" r="18.5" fill="#5a5c94"/>
<rect x="76" y="80" width="35" height="9" fill="#a9a9b8"/>
<rect x="87" y="126" width="12.5" height="23" fill="#77787f"/>
<path d="M125 163 Q130 134 169 132 Q206 134 213.5 158 Q195 150 172 170 Q150 158 125 163 Z" fill="#9a3d4a"/>
<path d="M130 164 Q160 150 208 158 L200 176 L142 176 Z" fill="#3f1d22"/>
<rect x="150" y="158" width="29" height="46" rx="8" fill="#b58a2f"/>
<circle cx="165" cy="153" r="9" fill="#6e4a3a"/>
<ellipse cx="150" cy="160" rx="7" ry="14" fill="#6b8a9a"/>
<rect x="157" y="200" width="5" height="26" fill="#b98d74"/><rect x="168" y="200" width="5" height="26" fill="#b98d74"/>
<path d="M251 20 Q290 -14 370 10 Q320 2 251 20 Z" fill="#3c3650"/>
<path d="M216 226 Q212 140 246 92 Q256 60 262 48 Q264 28 273 20 Q282 30 284 42 Q300 36 318 42 Q322 26 330 20 Q340 30 340 50 Q350 70 352 92 Q378 140 370 226 Z" fill="#4f4846"/>
<path d="M253 36 Q262 20 273 20 Q282 30 284 42 Q300 36 318 42 Q322 26 330 20 Q340 30 340 50 Q350 70 352 92 Q300 80 246 92 Q256 60 253 36 Z" fill="#3b3836"/><ellipse cx="276" cy="160" rx="42" ry="64" fill="#a08f6a"/>
<path d="M240 125 l8 -9 l8 9 M262 112 l8 -9 l8 9 M288 112 l8 -9 l8 9 M247 148 l8 -9 l8 9 M272 138 l8 -9 l8 9" stroke="#6a615c" stroke-width="4" fill="none"/>
<circle cx="273" cy="64" r="7" fill="#b9b3b8"/><circle cx="273" cy="64" r="3" fill="#2a2626"/>
<circle cx="327.5" cy="64" r="7" fill="#b9b3b8"/><circle cx="327.5" cy="64" r="3" fill="#2a2626"/>
<ellipse cx="300" cy="64" rx="9" ry="3.5" fill="#2c2927"/>
<path d="M284 38 Q300 30 318 40 Q300 46 284 38Z" fill="#2f5a2e"/>
</g></svg>
<div class="a" style="left:0px;top:87px;width:3360px;height:1px;background:rgba(70,75,72,.2);"></div>
<div class="a" style="left:296px;top:0px;width:2px;height:88px;background:#3d4140;"></div>
<div class="a" style="left:26px;top:32px;width:24px;height:24px;background:#fe4a49;border-radius:12px;"></div>
<div class="a" style="left:66px;top:32px;width:24px;height:24px;background:#fdb125;border-radius:12px;"></div>
<div class="a" style="left:106px;top:32px;width:24px;height:24px;background:#29c231;border-radius:12px;"></div>
<svg class="a" style="left:236px;top:27px;" width="32" height="34" viewBox="0 0 32 34"><defs><radialGradient id="ffg" cx=".6" cy=".25" r=".9"><stop offset="0" stop-color="#fff36a"/><stop offset=".35" stop-color="#ff9a1f"/><stop offset=".7" stop-color="#ff3b3d"/><stop offset="1" stop-color="#d41a7a"/></radialGradient></defs>
<path d="M16 4 C12 6 11 9 11 9 C9 8 6 9 5 7 C2 11 1 15 1 18 A15 15 0 0 0 31 18 C31 12 28 7 24 4 C25 7 24 9 23 10 C22 6 19 2 17 0 C18 2 17 3 16 4Z" fill="url(#ffg)"/>
<circle cx="16" cy="18" r="6.5" fill="#6a3bd6"/><path d="M9 13 Q14 10 20 13 Q14 13 12 17Z" fill="#ffbd2f"/></svg>
<div class="a" style="left:306px;top:8px;width:442px;height:72px;background:#0c0f0f;border:2px solid #b9ab73;border-radius:9px;box-sizing:border-box;"></div>
<svg class="a" style="left:326px;top:28px;" width="24" height="23" viewBox="0 0 32 30"><path d="M15.5 0 L21.4 10.4 L5.7 17.9 Z" fill="#1d3268"/>
<path d="M23.3 14.8 L31.5 29.4 L21.4 29.4 Z" fill="#1d3268"/>
<path d="M0 29.4 Q10.4 16.2 21.9 11.3 L22.8 12.4 Q13.8 18.5 7.5 29.4 Z" fill="#e8741a"/>
<path d="M8.1 29.4 Q13.8 19 23 13 L23.6 14.4 Q17.3 20.8 13.8 29.4 Z" fill="#f08a1c"/>
<path d="M15 29.4 Q17.9 21.3 23.6 15.3 L23.9 17.3 Q21.3 23 20.4 29.4 Z" fill="#e8741a"/></svg>
<div class="a t" style="left:320px;top:52.0px;height:12px;line-height:12px;font-size:8px;color:#1a2c66;font-weight:700;-webkit-text-stroke:0.15px;letter-spacing:-0.33px;font-style:italic;">HART</div>
<div class="a t" style="left:342px;top:53.0px;height:10px;line-height:10px;font-size:7px;color:#1a2c66;font-weight:700;-webkit-text-stroke:0.15px;letter-spacing:-2.0px;font-style:italic;">赫德</div>
<div class="a t" style="left:365.5px;top:29.7px;height:33px;line-height:33px;font-size:22px;color:#fbfbfe;letter-spacing:0.67px;width:341px;overflow:hidden;-webkit-mask-image:linear-gradient(90deg,#000 90%,transparent 100%);"><span class="c z">上传水单（新）</span> - <span class="c z">赫德国际物流管理</span></div>
<svg class="a" style="left:706px;top:34px;" width="20" height="20" viewBox="0 0 20 20"><path d="M3 3 L17 17 M17 3 L3 17" stroke="#fbfbfe" stroke-width="2.2" fill="none" stroke-linecap="round"/></svg>
<svg class="a" style="left:778px;top:32px;" width="26" height="26" viewBox="0 0 26 26"><path d="M13 2 V24 M2 13 H24" stroke="#fbfbfe" stroke-width="2.6" fill="none" stroke-linecap="round"/></svg>
<svg class="a" style="left:3227px;top:35px;" width="28" height="18" viewBox="0 0 28 18"><path d="M2 3 L14 15 L26 3" stroke="#fbfbfe" stroke-width="2.6" fill="none" stroke-linecap="round" stroke-linejoin="round"/></svg>
<svg class="a" style="left:32px;top:115px;" width="32" height="28" viewBox="0 0 32 28"><path d="M30 14 H3 M14 3 L3 14 L14 25" stroke="#fbfbfe" stroke-width="2.6" fill="none" stroke-linecap="round" stroke-linejoin="round"/></svg>
<svg class="a" style="left:104px;top:115px;" width="32" height="28" viewBox="0 0 32 28"><path d="M2 14 H29 M18 3 L29 14 L18 25" stroke="#7b7d7d" stroke-width="2.6" fill="none" stroke-linecap="round" stroke-linejoin="round"/></svg>
<svg class="a" style="left:176px;top:113px;" width="32" height="32" viewBox="0 0 32 32"><path d="M28 17 A12.5 12.5 0 1 1 21 5.8" stroke="#fbfbfe" stroke-width="2.6" fill="none" stroke-linecap="round"/><path d="M19 3 L29 3 L29 13 Z" fill="#fbfbfe"/></svg>
<svg class="a" style="left:247px;top:112px;" width="32" height="34" viewBox="0 0 32 34"><path d="M3 15 L16 3 L29 15 V29 Q29 31 27 31 H5 Q3 31 3 29 Z" stroke="#fbfbfe" stroke-width="2.6" fill="none" stroke-linejoin="round"/><path d="M12 31 V22 Q12 19 16 19 Q20 19 20 22 V31" stroke="#fbfbfe" stroke-width="2.6" fill="none"/></svg>
<div class="a" style="left:534px;top:96px;width:2220px;height:64px;background:linear-gradient(90deg,#272c2c 0%,#2b3131 45%,#252a2a 70%,#222626 100%);border-radius:9px;"></div>
<svg class="a" style="left:550px;top:111px;" width="32" height="34" viewBox="0 0 32 34"><path d="M16 2 L29 8 Q30 24 16 32 Q2 24 3 8 Z" stroke="#d9d48e" stroke-width="2.4" fill="none" stroke-linejoin="round"/></svg>
<svg class="a" style="left:606px;top:110px;" width="34" height="36" viewBox="0 0 34 36"><rect x="5" y="17" width="22" height="15" rx="3" stroke="#d9d48e" stroke-width="2.4" fill="none"/><path d="M9 17 V11 Q9 3 16 3 Q23 3 23 11 V13" stroke="#d9d48e" stroke-width="2.4" fill="none"/><path d="M3 6 L29 33" stroke="#e3103b" stroke-width="3"/></svg>
<svg class="a" style="left:662px;top:114px;" width="32" height="28" viewBox="0 0 32 28"><path d="M2 8 H17 M14 21 H30" stroke="#d9d48e" stroke-width="2.4" fill="none" stroke-linecap="round"/><circle cx="24" cy="7" r="4.2" stroke="#d9d48e" stroke-width="2.4" fill="none"/><circle cx="7" cy="21" r="4.2" stroke="#d9d48e" stroke-width="2.4" fill="none"/></svg>
<svg class="a" style="left:717px;top:116px;" width="36" height="24" viewBox="0 0 36 24"><circle cx="9" cy="12" r="7" stroke="#d9d48e" stroke-width="2.4" fill="none"/><path d="M16 11 H33 M28 11 V18" stroke="#d9d48e" stroke-width="2.4" fill="none" stroke-linecap="round"/></svg>
<div class="a t" style="left:771px;top:108.5px;height:42px;line-height:42px;font-size:28px;color:#716f4d;letter-spacing:0.89px;">testtrunkbookingmgr.</div>
<div class="a t" style="left:1048px;top:108.5px;height:42px;line-height:42px;font-size:28px;color:#e6e896;letter-spacing:1.06px;">hart-worldwide.com</div>
<div class="a t" style="left:1310px;top:108.5px;height:42px;line-height:42px;font-size:28px;color:#716f4d;letter-spacing:0.53px;">/#/iframePageCustomerBill/BillSettlementMgrNew</div>
<svg class="a" style="left:2652px;top:115px;" width="28" height="28" viewBox="0 0 28 28"><rect x="0" y="0" width="12" height="3" fill="#d9d48e"/><rect x="0" y="9" width="12" height="3" fill="#d9d48e"/><rect x="0" y="0" width="3" height="12" fill="#d9d48e"/><rect x="9" y="0" width="3" height="12" fill="#d9d48e"/><rect x="4.5" y="4.5" width="3" height="3" fill="#d9d48e"/><rect x="16" y="0" width="12" height="3" fill="#d9d48e"/><rect x="16" y="9" width="12" height="3" fill="#d9d48e"/><rect x="16" y="0" width="3" height="12" fill="#d9d48e"/><rect x="25" y="0" width="3" height="12" fill="#d9d48e"/><rect x="20.5" y="4.5" width="3" height="3" fill="#d9d48e"/><rect x="0" y="16" width="12" height="3" fill="#d9d48e"/><rect x="0" y="25" width="12" height="3" fill="#d9d48e"/><rect x="0" y="16" width="3" height="12" fill="#d9d48e"/><rect x="9" y="16" width="3" height="12" fill="#d9d48e"/><rect x="4.5" y="20.5" width="3" height="3" fill="#d9d48e"/><rect x="16" y="16" width="4" height="4" fill="#d9d48e"/><rect x="24" y="16" width="4" height="4" fill="#d9d48e"/><rect x="20" y="20" width="4" height="4" fill="#d9d48e"/><rect x="16" y="24" width="4" height="4" fill="#d9d48e"/><rect x="24" y="24" width="4" height="4" fill="#d9d48e"/><rect x="13" y="6" width="2" height="2" fill="#d9d48e"/><rect x="13" y="13" width="2" height="2" fill="#d9d48e"/><rect x="6" y="13" width="2" height="2" fill="#d9d48e"/></svg>
<svg class="a" style="left:2706px;top:112px;" width="34" height="33" viewBox="0 0 34 33"><path d="M17 2.5 L21.5 12 L31.5 13.2 L24 20.3 L26 30.5 L17 25.5 L8 30.5 L10 20.3 L2.5 13.2 L12.5 12 Z" stroke="#d9d48e" stroke-width="2.4" fill="none" stroke-linejoin="round"/></svg>
<svg class="a" style="left:3010px;top:113px;" width="30" height="30" viewBox="0 0 30 30"><path d="M7 0 V22 H30 M0 7 H22 V30" stroke="#fff" stroke-width="5" fill="none"/></svg>
<svg class="a" style="left:3082px;top:114px;" width="30" height="30" viewBox="0 0 30 30"><path d="M1 11 L12 1 V7 Q28 8 27 22 Q26 28 19 29 Q24 24 21 18 Q18 15 12 15 V21 Z" fill="#fff"/></svg>
<svg class="a" style="left:3152px;top:112px;" width="34" height="34" viewBox="0 0 34 34"><defs><radialGradient id="b1" cx=".35" cy=".3" r=".8"><stop offset="0" stop-color="#fff"/><stop offset="1" stop-color="#9a9a9a"/></radialGradient>
<radialGradient id="b2" cx=".35" cy=".3" r=".8"><stop offset="0" stop-color="#999"/><stop offset=".5" stop-color="#111"/><stop offset="1" stop-color="#000"/></radialGradient>
<radialGradient id="b3" cx=".35" cy=".3" r=".8"><stop offset="0" stop-color="#eee"/><stop offset="1" stop-color="#555"/></radialGradient></defs>
<circle cx="21" cy="10" r="9" fill="url(#b1)"/><circle cx="10" cy="14" r="9.5" fill="url(#b2)"/><circle cx="23" cy="22" r="9" fill="url(#b3)"/></svg>
<svg class="a" style="left:3226px;top:111px;" width="30" height="34" viewBox="0 0 30 34"><path d="M4 13 H10 V8 Q10 3 14.5 3 Q19 3 19 8 V13 H26 V31 H4 V25 Q10 25 10 21.5 Q10 18 4 18 Z" stroke="#fff" stroke-width="2.6" fill="none" stroke-linejoin="round"/></svg>
<svg class="a" style="left:3298px;top:106px;" width="32" height="34" viewBox="0 0 32 34"><path d="M2 12 H14 M2 21 H26 M2 30 H26" stroke="#fff" stroke-width="2.4" fill="none" stroke-linecap="round"/><circle cx="24.5" cy="7" r="6" fill="#2ac59c"/></svg>
<svg class="a" style="left:26px;top:180px;" width="28" height="33" viewBox="0 0 28 33"><ellipse cx="14" cy="27" rx="13" ry="6" fill="#27455d"/><ellipse cx="14" cy="13" rx="10.5" ry="12" fill="#e9c9a8"/><path d="M4 9 Q6 1 14 1 Q10 4 8 8 Z" fill="#3b3a3a"/><path d="M10 25 L14 27 L18 25 L18 29 L14 27 L10 29Z" fill="#d2322d"/><circle cx="11" cy="12" r="1.3" fill="#333"/><circle cx="18" cy="12" r="1.3" fill="#333"/></svg>
<div class="a t" style="left:62.6px;top:180.3px;height:33px;line-height:33px;font-size:22px;color:#fbfbfe;letter-spacing:0.95px;">Dashboard [Jenkins]</div>
<svg class="a" style="left:305px;top:180px;" width="32" height="32" viewBox="0 0 32 32"><rect x="0" y="0" width="32" height="32" fill="#2f6fdd"/><path d="M3 8 L29 4 L29 12 L21 12 L21 30 L12 30 L12 13 L6 18 Z" fill="#0d1a2d"/></svg>
<div class="a t" style="left:345px;top:180.3px;height:33px;line-height:33px;font-size:22px;color:#fbfbfe;">TAPD</div>
<svg class="a" style="left:428px;top:182px;" width="31" height="27" viewBox="0 0 31 27"><path d="M2 6 Q2 2 6 2 H11 Q13 2 14.5 4 L15.5 5.5 H25 Q29 5.5 29 9.5 V21 Q29 25 25 25 H6 Q2 25 2 21 Z" stroke="#fbfbfe" stroke-width="2.2" fill="none" stroke-linejoin="round"/></svg>
<div class="a t" style="left:464.7px;top:179.7px;height:33px;line-height:33px;font-size:22px;color:#fbfbfe;-webkit-text-stroke:0.15px;letter-spacing:0.46px;">赫德物流项目</div>
<svg class="a" style="left:624px;top:182px;" width="31" height="27" viewBox="0 0 31 27"><path d="M2 6 Q2 2 6 2 H11 Q13 2 14.5 4 L15.5 5.5 H25 Q29 5.5 29 9.5 V21 Q29 25 25 25 H6 Q2 25 2 21 Z" stroke="#fbfbfe" stroke-width="2.2" fill="none" stroke-linejoin="round"/></svg>
<div class="a t" style="left:661.7px;top:179.7px;height:33px;line-height:33px;font-size:22px;color:#fbfbfe;-webkit-text-stroke:0.15px;letter-spacing:0.07px;">土流网测试</div>
<svg class="a" style="left:798px;top:182px;" width="31" height="27" viewBox="0 0 31 27"><path d="M2 6 Q2 2 6 2 H11 Q13 2 14.5 4 L15.5 5.5 H25 Q29 5.5 29 9.5 V21 Q29 25 25 25 H6 Q2 25 2 21 Z" stroke="#fbfbfe" stroke-width="2.2" fill="none" stroke-linejoin="round"/></svg>
<div class="a t" style="left:835.6px;top:179.7px;height:33px;line-height:33px;font-size:22px;color:#fbfbfe;letter-spacing:0.85px;"><span class="c z">土流网</span>stg/<span class="c z">线上</span></div>
<svg class="a" style="left:1012px;top:182px;" width="31" height="27" viewBox="0 0 31 27"><path d="M2 6 Q2 2 6 2 H11 Q13 2 14.5 4 L15.5 5.5 H25 Q29 5.5 29 9.5 V21 Q29 25 25 25 H6 Q2 25 2 21 Z" stroke="#fbfbfe" stroke-width="2.2" fill="none" stroke-linejoin="round"/></svg>
<div class="a t" style="left:1049.7px;top:179.7px;height:33px;line-height:33px;font-size:22px;color:#fbfbfe;-webkit-text-stroke:0.15px;letter-spacing:-0.03px;">农场管家</div>
<svg class="a" style="left:1163px;top:182px;" width="31" height="27" viewBox="0 0 31 27"><path d="M2 6 Q2 2 6 2 H11 Q13 2 14.5 4 L15.5 5.5 H25 Q29 5.5 29 9.5 V21 Q29 25 25 25 H6 Q2 25 2 21 Z" stroke="#fbfbfe" stroke-width="2.2" fill="none" stroke-linejoin="round"/></svg>
<div class="a t" style="left:1201px;top:179.7px;height:33px;line-height:33px;font-size:22px;color:#fbfbfe;-webkit-text-stroke:0.15px;letter-spacing:0.4px;">地查查</div>
<svg class="a" style="left:1294px;top:182px;" width="31" height="27" viewBox="0 0 31 27"><path d="M2 6 Q2 2 6 2 H11 Q13 2 14.5 4 L15.5 5.5 H25 Q29 5.5 29 9.5 V21 Q29 25 25 25 H6 Q2 25 2 21 Z" stroke="#fbfbfe" stroke-width="2.2" fill="none" stroke-linejoin="round"/></svg>
<div class="a t" style="left:1331px;top:179.7px;height:33px;line-height:33px;font-size:22px;color:#fbfbfe;letter-spacing:0.5px;">CRM</div>
<svg class="a" style="left:1406px;top:182px;" width="31" height="27" viewBox="0 0 31 27"><path d="M2 6 Q2 2 6 2 H11 Q13 2 14.5 4 L15.5 5.5 H25 Q29 5.5 29 9.5 V21 Q29 25 25 25 H6 Q2 25 2 21 Z" stroke="#fbfbfe" stroke-width="2.2" fill="none" stroke-linejoin="round"/></svg>
<div class="a t" style="left:1444.5px;top:179.7px;height:33px;line-height:33px;font-size:22px;color:#fbfbfe;-webkit-text-stroke:0.15px;letter-spacing:0.17px;">燕子到家</div>
<svg class="a" style="left:1558px;top:182px;" width="31" height="27" viewBox="0 0 31 27"><path d="M2 6 Q2 2 6 2 H11 Q13 2 14.5 4 L15.5 5.5 H25 Q29 5.5 29 9.5 V21 Q29 25 25 25 H6 Q2 25 2 21 Z" stroke="#fbfbfe" stroke-width="2.2" fill="none" stroke-linejoin="round"/></svg>
<div class="a t" style="left:1596.5px;top:179.7px;height:33px;line-height:33px;font-size:22px;color:#fbfbfe;-webkit-text-stroke:0.15px;letter-spacing:0.33px;">数字乡村</div>
<svg class="a" style="left:1710px;top:182px;" width="31" height="27" viewBox="0 0 31 27"><path d="M2 6 Q2 2 6 2 H11 Q13 2 14.5 4 L15.5 5.5 H25 Q29 5.5 29 9.5 V21 Q29 25 25 25 H6 Q2 25 2 21 Z" stroke="#fbfbfe" stroke-width="2.2" fill="none" stroke-linejoin="round"/></svg>
<div class="a t" style="left:1748.5px;top:179.7px;height:33px;line-height:33px;font-size:22px;color:#fbfbfe;-webkit-text-stroke:0.15px;letter-spacing:0.7px;">安化项目</div>
<svg class="a" style="left:1862px;top:182px;" width="31" height="27" viewBox="0 0 31 27"><path d="M2 6 Q2 2 6 2 H11 Q13 2 14.5 4 L15.5 5.5 H25 Q29 5.5 29 9.5 V21 Q29 25 25 25 H6 Q2 25 2 21 Z" stroke="#fbfbfe" stroke-width="2.2" fill="none" stroke-linejoin="round"/></svg>
<div class="a t" style="left:1900.6px;top:179.7px;height:33px;line-height:33px;font-size:22px;color:#fbfbfe;-webkit-text-stroke:0.15px;letter-spacing:0.67px;">产权项目</div>
<svg class="a" style="left:2014px;top:182px;" width="31" height="27" viewBox="0 0 31 27"><path d="M2 6 Q2 2 6 2 H11 Q13 2 14.5 4 L15.5 5.5 H25 Q29 5.5 29 9.5 V21 Q29 25 25 25 H6 Q2 25 2 21 Z" stroke="#fbfbfe" stroke-width="2.2" fill="none" stroke-linejoin="round"/></svg>
<div class="a t" style="left:2052.6px;top:179.7px;height:33px;line-height:33px;font-size:22px;color:#fbfbfe;-webkit-text-stroke:0.15px;letter-spacing:0.28px;">五大连池项目</div>
<svg class="a" style="left:2208px;top:180px;" width="32" height="32" viewBox="0 0 32 32"><rect x="2" y="8" width="28" height="21" rx="5" stroke="#1d9fe0" stroke-width="3.4" fill="none"/><path d="M9 2 L13 8 M23 2 L19 8" stroke="#1d9fe0" stroke-width="3.2" stroke-linecap="round"/><path d="M10 16 V20 M22 16 V20" stroke="#1d9fe0" stroke-width="3.2" stroke-linecap="round"/></svg>
<div class="a t" style="left:2247.6px;top:179.7px;height:33px;line-height:33px;font-size:22px;color:#fbfbfe;letter-spacing:1.4px;"><span class="c z">哔哩哔哩</span> (<span class="c z">゜</span>-<span class="c z">゜</span>)<span class="c z">つロ</span>...</div>
<svg class="a" style="left:2504px;top:180px;" width="32" height="32" viewBox="0 0 32 32"><circle cx="14" cy="8" r="5.5" stroke="#7e8a86" stroke-width="2.6" fill="none"/><circle cx="6" cy="25" r="3.5" fill="#6fae7a"/><circle cx="24" cy="25" r="5" stroke="#7e8a86" stroke-width="2.6" fill="none"/><path d="M11 13 L7 22 M17 13 L21 21 M10 25 H19" stroke="#7e8a86" stroke-width="2.6" fill="none"/></svg>
<div class="a t" style="left:2543.6px;top:179.7px;height:33px;line-height:33px;font-size:22px;color:#fbfbfe;letter-spacing:0.82px;">Apollo<span class="c z">配置中心</span></div>
<svg class="a" style="left:2721px;top:182px;" width="32" height="30" viewBox="0 0 32 30"><rect x="0" y="4" width="32" height="22" fill="#2a5de0"/><path d="M3 4 V26 M3 15 H12 M12 4 V26" stroke="#fff" stroke-width="3.4" fill="none"/><path d="M18 4 V26 M29 4 L19 16 L30 26" stroke="#fff" stroke-width="4" fill="none"/></svg>
<div class="a t" style="left:2761px;top:179.7px;height:33px;line-height:33px;font-size:22px;color:#fbfbfe;-webkit-text-stroke:0.15px;letter-spacing:0.17px;">条码自动生成器</div>
<svg class="a" style="left:3132px;top:181px;" width="24" height="33" viewBox="0 0 24 33"><rect x="2" y="2" width="20" height="29" rx="3.5" stroke="#fff" stroke-width="3" fill="none"/><rect x="9.5" y="25" width="5" height="2.4" fill="#fff"/></svg>
<div class="a t" style="left:3159.5px;top:179.7px;height:33px;line-height:33px;font-size:22px;color:#fbfbfe;-webkit-text-stroke:0.15px;letter-spacing:0.07px;">移动设备上的书签</div>
<div class="a" style="left:672px;top:474px;width:2016px;height:1186px;background:#fff;border-radius:5px;box-shadow:0 8px 24px rgba(0,0,0,.15),0 18px 56px 8px rgba(0,0,0,.07);"></div>
<div class="a t" style="left:720px;top:494.0px;height:48px;line-height:48px;font-size:32px;color:#262626;font-weight:500;-webkit-text-stroke:0.15px;">结算</div>
<div class="a" style="left:672px;top:558px;width:2016px;height:2px;background:#ededed;"></div>
<svg class="a" style="left:2633px;top:504px;" width="24" height="26" viewBox="0 0 24 26"><path d="M2 2 L22 24 M22 2 L2 24" stroke="#1890ff" stroke-width="2.6" fill="none"/></svg>
<div class="a t" style="left:863px;top:665.5px;height:48px;line-height:48px;font-size:32px;color:#262626;letter-spacing:2.09px;"><span class="c z">合计</span>:1<span class="c z">个账单，账单金额</span>:8120.00,<span class="c z">付款金额</span>:8120.00<span class="c z">，币种</span>:CNY</div>
<div class="a" style="left:865px;top:736px;width:1679px;height:158px;background:#fff;border:2px solid #ebebeb;border-radius:4px;box-sizing:border-box;"></div>
<div class="a" style="left:866px;top:737px;width:1677px;height:78px;background:#f5f5f5;"></div>
<div class="a" style="left:865px;top:814px;width:1679px;height:2px;background:#ebebeb;"></div>
<div class="a" style="left:1199px;top:736px;width:2px;height:158px;background:#ebebeb;"></div>
<div class="a" style="left:1535px;top:736px;width:2px;height:158px;background:#ebebeb;"></div>
<div class="a" style="left:1871px;top:736px;width:2px;height:158px;background:#ebebeb;"></div>
<div class="a" style="left:2206px;top:736px;width:2px;height:158px;background:#ebebeb;"></div>
<div class="a t" style="left:881.5px;top:757.0px;height:42px;line-height:42px;font-size:28px;color:#262626;font-weight:500;-webkit-text-stroke:0.15px;letter-spacing:0.5px;">账单号</div>
<div class="a t" style="left:880.5px;top:834.5px;height:42px;line-height:42px;font-size:28px;color:#262626;letter-spacing:1.95px;">E2205273997</div>
<div class="a t" style="left:1217.0px;top:757.0px;height:42px;line-height:42px;font-size:28px;color:#262626;font-weight:500;-webkit-text-stroke:0.15px;letter-spacing:0.33px;">应付日期</div>
<div class="a t" style="left:1219.0px;top:834.5px;height:42px;line-height:42px;font-size:28px;color:#262626;">-</div>
<div class="a t" style="left:1552.5px;top:757.0px;height:42px;line-height:42px;font-size:28px;color:#262626;font-weight:500;-webkit-text-stroke:0.15px;">账单金额</div>
<div class="a t" style="left:1552.5px;top:834.5px;height:42px;line-height:42px;font-size:28px;color:#262626;letter-spacing:3.17px;">8120</div>
<div class="a t" style="left:1887.0px;top:757.0px;height:42px;line-height:42px;font-size:28px;color:#262626;font-weight:500;-webkit-text-stroke:0.15px;letter-spacing:1.0px;">币种</div>
<div class="a t" style="left:1888.0px;top:834.5px;height:42px;line-height:42px;font-size:28px;color:#262626;letter-spacing:1.0px;">CNY</div>
<div class="a t" style="left:2223.5px;top:757.0px;height:42px;line-height:42px;font-size:28px;color:#262626;font-weight:500;-webkit-text-stroke:0.15px;">付款金额</div>
<div class="a" style="left:2224px;top:822px;width:320px;height:63px;background:#fff;border:2px solid #d9d9d9;border-radius:5px;box-sizing:border-box;"></div>
<div class="a t" style="left:2248.6px;top:834.5px;height:42px;line-height:42px;font-size:28px;color:#262626;letter-spacing:0.9px;">8120.00</div>
<div class="a t" style="left:820px;top:967.0px;height:42px;line-height:42px;font-size:28px;color:#262626;-webkit-text-stroke:0.15px;">客服备注</div>
<div class="a t" style="left:936px;top:965.5px;height:42px;line-height:42px;font-size:28px;color:#262626;">:</div>
<div class="a" style="left:960px;top:952px;width:1600px;height:152px;background:#fff;border:2px solid #d9d9d9;border-radius:5px;box-sizing:border-box;"></div>
<div class="a t" style="left:984px;top:967.0px;height:42px;line-height:42px;font-size:28px;color:#c4c4c4;-webkit-text-stroke:0px;letter-spacing:-0.5px;">请输入</div>
<svg class="a" style="left:2530px;top:1074px;" width="26" height="26" viewBox="0 0 26 26"><path d="M2 25 L25 2 M10 25 L25 10 M18 25 L25 18" stroke="#555" stroke-width="2" fill="none"/></svg>
<div class="a t" style="left:823px;top:1170.0px;height:39px;line-height:39px;font-size:26px;color:#ff4d4f;-webkit-text-stroke:0px;">*</div>
<div class="a t" style="left:842px;top:1175.0px;height:42px;line-height:42px;font-size:28px;color:#262626;-webkit-text-stroke:0.15px;">结算币种</div>
<div class="a t" style="left:956px;top:1173.5px;height:42px;line-height:42px;font-size:28px;color:#262626;">:</div>
<div class="a" style="left:982px;top:1165px;width:208px;height:64px;background:#fff;border:2px solid #d9d9d9;border-radius:5px;box-sizing:border-box;"></div>
<div class="a t" style="left:1006px;top:1177.5px;height:42px;line-height:42px;font-size:28px;color:#262626;letter-spacing:-0.5px;">CNY</div>
<svg class="a" style="left:1145px;top:1189px;" width="22" height="16" viewBox="0 0 22 16"><path d="M2 2 L11 13 L20 2" stroke="#8c8c8c" stroke-width="2" fill="none"/></svg>
<div class="a" style="left:1206px;top:1172px;width:140px;height:44px;background:#dcdcdc;border-radius:22px;"></div>
<div class="a" style="left:1210px;top:1176px;width:36px;height:36px;background:#fff;border-radius:18px;box-shadow:0 2px 4px rgba(0,35,11,.2);"></div>
<div class="a t" style="left:1258px;top:1177.0px;height:36px;line-height:36px;font-size:24px;color:#fff;-webkit-text-stroke:0.15px;">协商汇</div>
<div class="a t" style="left:876px;top:1291.0px;height:39px;line-height:39px;font-size:26px;color:#ff4d4f;-webkit-text-stroke:0px;">*</div>
<div class="a t" style="left:894.6px;top:1296.0px;height:42px;line-height:42px;font-size:28px;color:#262626;-webkit-text-stroke:0.15px;letter-spacing:0.4px;">汇率</div>
<div class="a t" style="left:954px;top:1294.5px;height:42px;line-height:42px;font-size:28px;color:#262626;">:</div>
<div class="a" style="left:979px;top:1282px;width:432px;height:64px;background:#f2f2f2;border:2px solid #d9d9d9;border-radius:5px;box-sizing:border-box;"></div>
<div class="a t" style="left:1001.5px;top:1294.5px;height:42px;line-height:42px;font-size:28px;color:#b0b0b0;-webkit-text-stroke:0.1px;letter-spacing:1.36px;">1.000000</div>
<div class="a t" style="left:1427px;top:1294.5px;height:42px;line-height:42px;font-size:28px;color:#262626;letter-spacing:1.12px;">CNY--&gt;CNY</div>
<div class="a t" style="left:2060px;top:1296.0px;height:42px;line-height:42px;font-size:28px;color:#262626;-webkit-text-stroke:0.15px;letter-spacing:0.2px;">实际结算金额</div>
<div class="a t" style="left:2230px;top:1294.5px;height:42px;line-height:42px;font-size:28px;color:#262626;">:</div>
<div class="a" style="left:2258px;top:1282px;width:430px;height:64px;background:#f2f2f2;border:2px solid #d9d9d9;border-radius:5px;box-sizing:border-box;border-right:none;border-top-right-radius:0;border-bottom-right-radius:0;"></div>
<div class="a t" style="left:2281px;top:1294.5px;height:42px;line-height:42px;font-size:28px;color:#b0b0b0;-webkit-text-stroke:0.1px;letter-spacing:1.0px;">8120.00</div>
<div class="a t" style="left:808px;top:1403.0px;height:39px;line-height:39px;font-size:26px;color:#ff4d4f;-webkit-text-stroke:0px;">*</div>
<div class="a t" style="left:825px;top:1408.0px;height:42px;line-height:42px;font-size:28px;color:#262626;-webkit-text-stroke:0.15px;letter-spacing:0.33px;">水单文件</div>
<div class="a t" style="left:942px;top:1406.5px;height:42px;line-height:42px;font-size:28px;color:#262626;">:</div>
<div class="a" style="left:966px;top:1392px;width:686px;height:64px;background:#fff;border:2px solid #d9d9d9;border-radius:5px;box-sizing:border-box;"></div>
<div class="a" style="left:1520px;top:1392px;width:132px;height:64px;background:#fafafa;border:2px solid #d9d9d9;border-radius:5px;box-sizing:border-box;border-top-left-radius:0;border-bottom-left-radius:0;"></div>
<div class="a t" style="left:990px;top:1406.0px;height:42px;line-height:42px;font-size:28px;color:#c4c4c4;-webkit-text-stroke:0px;letter-spacing:-0.25px;">请上传水单</div>
<svg class="a" style="left:1546px;top:1410px;" width="26" height="26" viewBox="0 0 26 26"><path d="M2 16 V24 H24 V16 M13 19 V3 M8 8 L13 2.5 L18 8" stroke="#262626" stroke-width="2.4" fill="none"/></svg>
<div class="a t" style="left:1572px;top:1406.0px;height:42px;line-height:42px;font-size:28px;color:#262626;-webkit-text-stroke:0.15px;">上传</div>
<div class="a" style="left:672px;top:1554px;width:2016px;height:2px;background:#ededed;"></div>
<div class="a" style="left:2184px;top:1576px;width:228px;height:64px;background:#fff;border:2px solid #d9d9d9;border-radius:5px;box-sizing:border-box;"></div>
<div class="a t" style="left:2267px;top:1590.0px;height:42px;line-height:42px;font-size:28px;color:#262626;"><span class="c">取</span> <span class="c">消</span></div>
<div class="a" style="left:2418px;top:1566px;width:248px;height:82px;background:#f2f8ff;border-radius:12px;"></div>
<div class="a" style="left:2428px;top:1576px;width:228px;height:64px;background:#3896ff;border-radius:5px;"></div>
<div class="a t" style="left:2511px;top:1590.0px;height:42px;line-height:42px;font-size:28px;color:#fff;-webkit-text-stroke:0.1px;letter-spacing:-0.5px;">确 定</div>
<div class="a" style="left:2385px;top:1545.5px;width:306.5px;height:110px;border:7.6px solid #d0021b;border-radius:4px;box-sizing:border-box;"></div>
<svg class="a" style="left:2309px;top:1413px;overflow:visible;" width="210" height="205" viewBox="0 0 210 205"><path d="M1.7 0.9 L170 161" stroke="#d0021b" stroke-width="7.4" fill="none"/><path d="M196 185.4 L156.8 170.6 L179.3 147.2 Z" fill="#d0021b"/></svg>
</div>
</body>
</html>
